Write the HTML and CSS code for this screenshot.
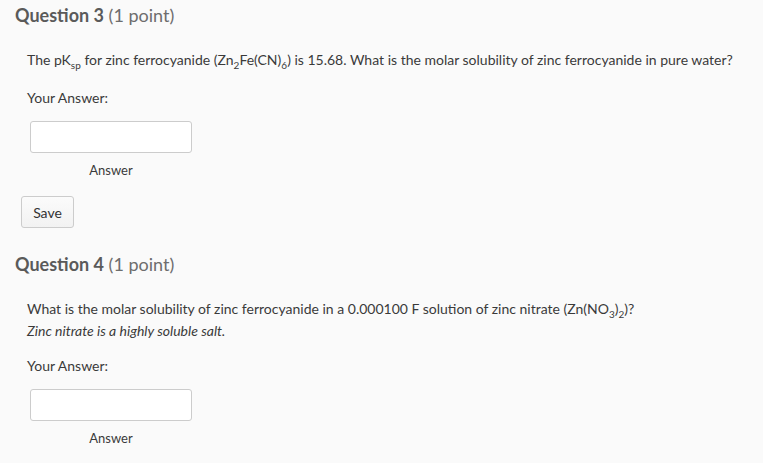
FILE: index.html
```html
<!DOCTYPE html>
<html>
<head>
<meta charset="utf-8">
<link rel="stylesheet" href="styles.css">
</head>
<body>
<div class="quiz">
  <section class="question">
    <h2 class="q-header"><span class="q-name">Question 3</span> <span class="q-points">(1 point)</span></h2>
    <div class="q-body">
      <p class="q-text">The pK<sub>sp</sub> for zinc ferrocyanide (Zn<sub>2</sub>Fe(CN)<sub>6</sub>) is 15.68. What is the molar solubility of zinc ferrocyanide in pure water?</p>
      <p class="your-answer">Your Answer:</p>
      <div class="answer-field">
        <input class="answer-input" type="text">
        <span class="answer-label">Answer</span>
      </div>
    </div>
    <button class="save-btn" type="button">Save</button>
  </section>
  <section class="question">
    <h2 class="q-header"><span class="q-name">Question 4</span> <span class="q-points">(1 point)</span></h2>
    <div class="q-body">
      <p class="q-text">What is the molar solubility of zinc ferrocyanide in a 0.000100 F solution of zinc nitrate (Zn(NO<sub>3</sub>)<sub>2</sub>)?<br><em>Zinc nitrate is a highly soluble salt.</em></p>
      <p class="your-answer your-answer-tight">Your Answer:</p>
      <div class="answer-field">
        <input class="answer-input" type="text">
        <span class="answer-label">Answer</span>
      </div>
    </div>
  </section>
</div>
</body>
</html>
```

FILE: styles.css
```css
html, body {
  margin: 0;
  padding: 0;
  background: #fafafa;
}
body {
  font-family: Lato, "Liberation Sans", sans-serif;
  font-size: 14px;
  color: #3a3a3a;
}
.quiz {
  padding: 0 0 0 15px;
}
.question {
  display: flex;
  flex-direction: column;
  align-items: flex-start;
}
.q-header {
  margin: 0;
  padding-top: 3px;
  font-size: 18px;
  line-height: 24px;
  font-weight: normal;
  color: #666;
}
.q-name {
  font-weight: bold;
  color: #5a5a5a;
}
.q-points {
  color: #6d6d6d;
}
.q-body {
  padding: 0 0 0 12px;
}
.q-text {
  margin: 22px 0 0;
  line-height: 22px;
}
.q-text sub {
  font-size: 10px;
  line-height: 0;
  vertical-align: -4px;
}
.your-answer {
  margin: 16px 0 0;
  line-height: 21px;
}
.your-answer-tight {
  margin-top: 13px;
}
.answer-field {
  display: flex;
  flex-direction: column;
  align-items: center;
  width: 162px;
  margin: 13px 0 0 3px;
}
.answer-input {
  box-sizing: border-box;
  width: 162px;
  height: 32px;
  margin: 0;
  border: 1px solid #ccc;
  border-radius: 3px;
  background: #fff;
}
.answer-label {
  margin-top: 7px;
  line-height: 20px;
  font-size: 13px;
}
.save-btn {
  box-sizing: border-box;
  margin: 16px 0 21px 6px;
  width: 53px;
  height: 32px;
  border: 1px solid #ccc;
  border-radius: 3px;
  background: linear-gradient(#fbfbfb, #f2f2f2);
  font-family: inherit;
  font-size: 14px;
  color: #333;
  padding: 0;
}
```
